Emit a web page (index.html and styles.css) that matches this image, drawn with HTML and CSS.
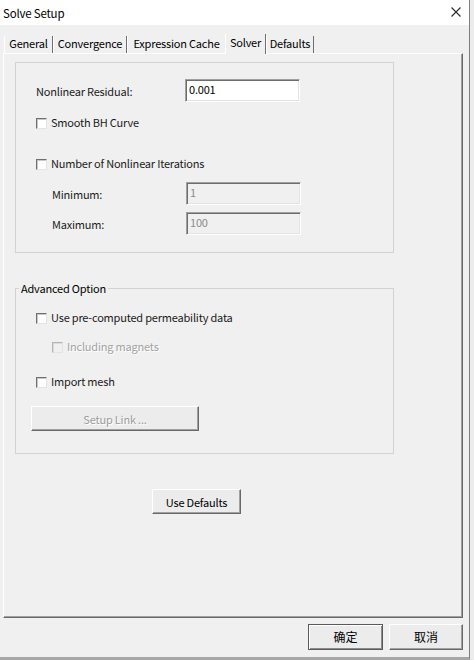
FILE: index.html
```html
<!DOCTYPE html>
<html>
<head>
<meta charset="utf-8">
<title>Solve Setup</title>
<link rel="stylesheet" href="styles.css">
</head>
<body>
<div class="window">
  <div class="titlebar">
    <span class="title">Solve Setup</span>
    <svg class="close" width="10" height="10" viewBox="0 0 10 10"><path d="M0.5 0.5 L9.5 9.5 M9.5 0.5 L0.5 9.5" stroke="#2b2b2b" stroke-width="1.1" fill="none"/></svg>
  </div>
  <div class="tabs">
    <div class="tab t-general">General</div>
    <div class="tab t-conv">Convergence</div>
    <div class="tab t-expr">Expression Cache</div>
    <div class="tab t-solver selected">Solver</div>
    <div class="tab t-def">Defaults</div>
  </div>
  <div class="panel">
    <div class="group g1">
      <div class="row r-resid">
        <span class="lbl lbl-wide">Nonlinear Residual:</span>
        <div class="edit">0.001</div>
      </div>
      <div class="check r-smooth"><span class="box"></span><span class="ctext">Smooth BH Curve</span></div>
      <div class="check r-iter"><span class="box"></span><span class="ctext">Number of Nonlinear Iterations</span></div>
      <div class="row r-min indent">
        <span class="lbl lbl-narrow">Minimum:</span>
        <div class="edit disabled">1</div>
      </div>
      <div class="row r-max indent">
        <span class="lbl lbl-narrow">Maximum:</span>
        <div class="edit disabled">100</div>
      </div>
    </div>
    <fieldset class="group g2">
      <legend>Advanced Option</legend>
      <div class="g2-body">
        <div class="check r-pre"><span class="box"></span><span class="ctext">Use pre-computed permeability data</span></div>
        <div class="check r-mag indent disabled"><span class="box"></span><span class="ctext">Including magnets</span></div>
        <div class="check r-mesh"><span class="box"></span><span class="ctext">Import mesh</span></div>
        <div class="btn setup disabled">Setup Link ...</div>
      </div>
    </fieldset>
    <div class="btn defaults">Use Defaults</div>
  </div>
  <div class="footer">
    <div class="btn ok cjk">确定</div>
    <div class="btn cancel cjk">取消</div>
  </div>
</div>
</body>
</html>
```
FILE: styles.css
```css
html, body {
  margin: 0;
  padding: 0;
}
body {
  width: 474px;
  height: 660px;
  background: #ececec;
  font-family: "Noto Sans CJK SC", "Noto Sans", sans-serif;
  font-size: 11px;
  letter-spacing: -0.2px;
  color: #1a1a1a;
  overflow: hidden;
}
.window {
  box-sizing: border-box;
  width: 470px;
  height: 660px;
  background: #f0f0f0;
  border-right: 1px solid #7f7f7f;
  border-bottom: 3px solid #a6a6a6;
  display: flex;
  flex-direction: column;
}
.titlebar {
  height: 25px;
  background: #ffffff;
  display: flex;
  align-items: center;
  justify-content: space-between;
  padding: 0 8px 0 3px;
  flex: none;
}
.title {
  line-height: 16px;
  font-size: 11.5px;
  color: #000;
}
.close {
  display: block;
  margin-top: -1px;
}
.tabs {
  height: 28px;
  display: flex;
  align-items: flex-end;
  padding-left: 4px;
  flex: none;
}
.tab {
  box-sizing: border-box;
  height: 17px;
  line-height: 15px;
  text-align: center;
  border-right: 1px solid #6f6f6f;
  border-left: 1px solid #ffffff;
  color: #000;
  white-space: nowrap;
}
.t-general { width: 49px; }
.t-conv { width: 74px; }
.t-expr { width: 98px; border-right: none; }
.t-solver { width: 41px; }
.t-def { width: 48px; }
.tab.selected {
  height: 20px;
  line-height: 16px;
  margin-bottom: -1px;
  background: #f0f0f0;
  position: relative;
  z-index: 1;
}
.panel {
  box-sizing: border-box;
  margin-left: 3px;
  width: 460px;
  height: 565px;
  border-top: 1px solid #ffffff;
  border-left: 1px solid #ffffff;
  border-right: 1px solid #696969;
  border-bottom: 1px solid #696969;
  box-shadow: inset -1px -1px 0 #a0a0a0;
  flex: none;
  display: flex;
  flex-direction: column;
  align-items: flex-start;
}
.group {
  box-sizing: border-box;
  width: 379px;
  margin-left: 11px;
  border: 1px solid #d2d2d2;
}
.g1 {
  margin-top: 8px;
  height: 191px;
  padding: 16px 0 0 20px;
}
.row {
  display: flex;
  align-items: center;
  height: 23px;
}
.indent {
  padding-left: 16px;
}
.lbl {
  flex: none;
  line-height: 16px;
}
.lbl-wide { width: 149px; }
.lbl-narrow { width: 134px; }
.edit {
  box-sizing: border-box;
  width: 115px;
  height: 23px;
  background: #ffffff;
  border-top: 1px solid #a0a0a0;
  border-left: 1px solid #a0a0a0;
  border-right: 1px solid #ffffff;
  border-bottom: 1px solid #ffffff;
  box-shadow: inset 1px 1px 0 #6d6d6d, inset -1px -1px 0 #e3e3e3;
  padding: 0 0 0 3px;
  line-height: 18px;
  color: #000;
}
.edit.disabled {
  background: #f0f0f0;
  color: #8c8c8c;
}
.check {
  display: flex;
  align-items: center;
  height: 16px;
}
.box {
  box-sizing: border-box;
  flex: none;
  width: 11px;
  height: 11px;
  margin-top: 2px;
  background: #ffffff;
  border-top: 1px solid #6f6f6f;
  border-left: 1px solid #6f6f6f;
  border-right: 1px solid #e4e4e4;
  border-bottom: 1px solid #e4e4e4;
  box-shadow: inset 1px 1px 0 #c8c8c8;
}
.ctext {
  margin-left: 4px;
  line-height: 16px;
}
.check.disabled .box {
  background: #f0f0f0;
  border-top-color: #b4b4b4;
  border-left-color: #b4b4b4;
  box-shadow: inset 1px 1px 0 #dcdcdc;
}
.check.disabled .ctext {
  color: #a3a3a3;
  text-shadow: 1px 1px 0 #ffffff;
}
.r-smooth { margin-top: 12px; }
.r-iter { margin-top: 25px; }
.r-min { margin-top: 11px; }
.r-max { margin-top: 7px; }

fieldset.g2 {
  margin: 27px 0 0 11px;
  padding: 0 0 22px 0;
  min-inline-size: 0;
}
.g2 legend {
  margin-left: 3px;
  padding: 0 2px;
  line-height: 16px;
  color: #000;
}
.g2-body {
  padding: 13px 0 0 20px;
}
.r-mag { margin-top: 13px; }
.r-mesh { margin-top: 19px; }

.btn {
  box-sizing: border-box;
  display: flex;
  align-items: center;
  justify-content: center;
  background: #ececec;
  border-top: 1px solid #ffffff;
  border-left: 1px solid #ffffff;
  border-right: 1px solid #696969;
  border-bottom: 1px solid #696969;
  box-shadow: inset -1px -1px 0 #a0a0a0;
  color: #000;
  line-height: 16px;
  flex: none;
}
.btn.disabled {
  color: #9c9c9c;
  text-shadow: 1px 1px 0 #ffffff;
}
.setup {
  margin: 17px 0 0 -5px;
  width: 168px;
  height: 25px;
}
.defaults {
  margin: 35px 0 0 148px;
  width: 89px;
  height: 25px;
}
.footer {
  display: flex;
  justify-content: flex-end;
  gap: 6px;
  padding: 6px 6px 0 0;
}
.footer .btn {
  height: 26px;
}
.cjk {
  font-size: 12px;
  letter-spacing: 0;
}
.ok {
  width: 75px;
  border: 1px solid #5a5a5a;
  box-shadow: inset 1px 1px 0 #ffffff, inset -1px -1px 0 #8a8a8a;
}
.cancel {
  width: 74px;
}
```
